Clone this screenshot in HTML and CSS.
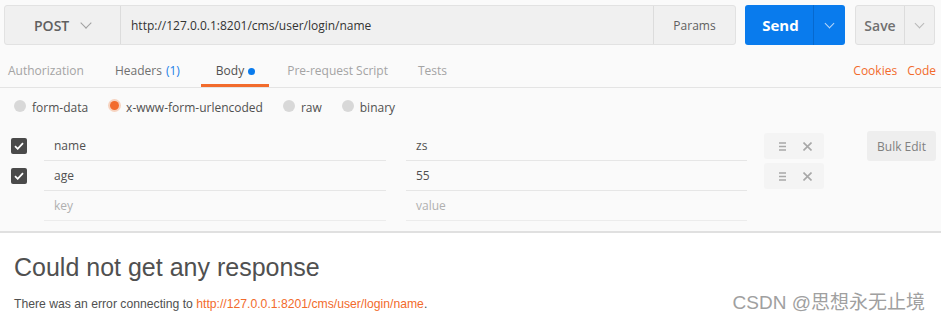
FILE: index.html
```html
<!DOCTYPE html>
<html lang="en">
<head>
  <meta charset="UTF-8" />
  <title>Postman request</title>
  <link rel="stylesheet" href="styles.css">
</head>
<body>
  <!-- URL bar -->
  <div class="url-bar">
    <div class="request">
      <div class="method">POST <span class="chev"></span></div>
      <div class="url">http://127.0.0.1:8201/cms/user/login/name</div>
      <div class="params">Params</div>
    </div>
    <div class="send">
      <span class="send-label">Send</span>
      <span class="send-drop"><span class="chev white"></span></span>
    </div>
    <div class="save">
      <span class="save-label">Save</span>
      <span class="save-drop"><span class="chev light"></span></span>
    </div>
  </div>

  <!-- Request tabs -->
  <div class="tabs">
    <span class="tab tab-auth">Authorization</span>
    <span class="tab tab-headers">Headers <span class="count">(1)</span></span>
    <span class="tab tab-body active">Body <span class="dot"></span></span>
    <span class="tab tab-pre">Pre-request Script</span>
    <span class="tab tab-tests">Tests</span>
    <span class="tab-links"><a>Cookies</a><a>Code</a></span>
  </div>

  <!-- Body type -->
  <div class="body-types">
    <label class="radio"><span class="circle"></span>form-data</label>
    <label class="radio"><span class="circle on"></span>x-www-form-urlencoded</label>
    <label class="radio"><span class="circle"></span>raw</label>
    <label class="radio"><span class="circle"></span>binary</label>
  </div>

  <!-- Key/value table -->
  <div class="kv">
    <div class="rows">
      <div class="row">
        <span class="check"><svg width="10" height="8" viewBox="0 0 10 8"><path d="M1 4.2 L3.7 6.8 L9 1.2" fill="none" stroke="#fff" stroke-width="1.8"/></svg></span>
        <div class="cell key">name</div>
        <div class="cell value">zs</div>
        <div class="row-actions">
          <svg width="7" height="9" viewBox="0 0 7 9"><path d="M0 1h7M0 4.5h7M0 8h7" stroke="#a8a8a8" stroke-width="1.4"/></svg>
          <svg width="9" height="9" viewBox="0 0 9 9"><path d="M0.5 0.5l8 8M8.5 0.5l-8 8" stroke="#a8a8a8" stroke-width="1.6"/></svg>
        </div>
      </div>
      <div class="row">
        <span class="check"><svg width="10" height="8" viewBox="0 0 10 8"><path d="M1 4.2 L3.7 6.8 L9 1.2" fill="none" stroke="#fff" stroke-width="1.8"/></svg></span>
        <div class="cell key">age</div>
        <div class="cell value">55</div>
        <div class="row-actions">
          <svg width="7" height="9" viewBox="0 0 7 9"><path d="M0 1h7M0 4.5h7M0 8h7" stroke="#a8a8a8" stroke-width="1.4"/></svg>
          <svg width="9" height="9" viewBox="0 0 9 9"><path d="M0.5 0.5l8 8M8.5 0.5l-8 8" stroke="#a8a8a8" stroke-width="1.6"/></svg>
        </div>
      </div>
      <div class="row">
        <span class="check empty"></span>
        <div class="cell key placeholder">key</div>
        <div class="cell value placeholder">value</div>
      </div>
    </div>
    <div class="bulk">Bulk Edit</div>
  </div>

  <!-- Response -->
  <div class="response">
    <h1>Could not get any response</h1>
    <p>There was an error connecting to <a>http://127.0.0.1:8201/cms/user/login/name</a>.</p>
    <div class="watermark">CSDN @思想永无止境</div>
  </div>
</body>
</html>
```

FILE: styles.css
```css
* {
  box-sizing: border-box;
}

body {
  margin: 0;
  font-family: 'Open Sans', 'Noto Sans', sans-serif;
  background: #fafafa;
  color: #505050;
  width: 941px;
  height: 320px;
  overflow: hidden;
}

/* url bar */
.url-bar {
  display: flex;
  height: 45px;
  padding: 5px 6px 0 4px;
}

.request {
  display: flex;
  flex: 1;
  height: 40px;
  background: #f0f0f0;
  border: 1px solid #e2e2e2;
  border-radius: 3px;
}

.method {
  width: 116px;
  display: flex;
  align-items: center;
  padding-left: 29px;
  font-size: 14px;
  font-weight: 600;
  color: #606060;
  border-right: 1px solid #dcdcdc;
}

.chev {
  display: inline-block;
  width: 8px;
  height: 8px;
  border-right: 1.5px solid #a0a0a0;
  border-bottom: 1.5px solid #a0a0a0;
  transform: rotate(45deg);
  margin: -4px 0 0 13px;
}

.chev.white {
  border-color: #b8d6f8;
  margin: -4px 0 0 0;
  width: 7px;
  height: 7px;
}

.chev.light {
  border-color: #b8b8b8;
  margin: -4px 0 0 0;
  width: 7px;
  height: 7px;
}

.url {
  flex: 1;
  display: flex;
  align-items: center;
  padding-left: 10px;
  font-size: 12px;
  color: #333;
}

.params {
  width: 82px;
  display: flex;
  align-items: center;
  justify-content: center;
  font-size: 12px;
  color: #606060;
  border-left: 1px solid #dcdcdc;
}

.send {
  display: flex;
  width: 100px;
  height: 40px;
  margin-left: 9px;
  background: #097bed;
  border-radius: 3px;
  color: #fff;
}

.send-label {
  width: 69px;
  display: flex;
  align-items: center;
  justify-content: center;
  padding-left: 3px;
  font-size: 15px;
  font-weight: 700;
  border-right: 1px solid #0669cf;
}

.send-drop, .save-drop {
  flex: 1;
  display: flex;
  align-items: center;
  justify-content: center;
}

.save {
  display: flex;
  width: 80px;
  height: 40px;
  margin-left: 10px;
  background: #f0f0f0;
  border: 1px solid #e0e0e0;
  border-radius: 3px;
}

.save-label {
  width: 49px;
  display: flex;
  align-items: center;
  justify-content: center;
  font-size: 14px;
  font-weight: 600;
  color: #707070;
  border-right: 1px solid #dcdcdc;
}

/* tabs */
.tabs {
  display: flex;
  align-items: stretch;
  height: 43px;
  border-bottom: 1px solid #e4e4e4;
  font-size: 12px;
  padding-top: 13px;
}

.tab {
  display: flex;
  align-items: flex-start;
  color: #a4a4a4;
  padding: 4px 0 0;
}

.tab-auth { margin-left: 8px; }
.tab-headers { margin-left: 31px; color: #707070; }
.tab-body {
  margin-left: 21px;
  padding: 4px 14px 0 15px;
  color: #505050;
  border-bottom: 3px solid #f26b2c;
}
.tab-pre { margin-left: 18px; }
.tab-tests { margin-left: 30px; }

.count {
  color: #1a80e8;
  margin-left: 4px;
}

.dot {
  display: inline-block;
  width: 7px;
  height: 7px;
  border-radius: 50%;
  background: #097bed;
  margin: 6px 0 0 4px;
}

.tab-links {
  margin-left: auto;
  padding: 4px 5px 0 0;
}

.tab-links a {
  color: #f26b2c;
  margin-left: 10px;
}

/* body types */
.body-types {
  display: flex;
  align-items: center;
  height: 39px;
  padding-left: 14px;
  font-size: 12px;
  color: #505050;
}

.radio {
  display: flex;
  align-items: center;
  margin-right: 20px;
}

.circle {
  width: 12px;
  height: 12px;
  border-radius: 50%;
  background: #d8d8d8;
  margin-right: 6px;
  margin-top: -4px;
}

.circle.on {
  background: #f26b2c;
  box-shadow: 0 0 0 2px #f6d3c0;
  width: 9px;
  height: 9px;
  margin-left: 2px;
  margin-right: 7px;
}

/* key/value table */
.kv {
  display: flex;
  padding: 4px 5px 0 11px;
  height: 102px;
}

.rows {
  display: flex;
  flex-direction: column;
}

.row {
  display: flex;
  align-items: center;
  height: 30px;
}

.check {
  width: 16px;
  height: 16px;
  border-radius: 2px;
  background: #4a4a4a;
  display: flex;
  align-items: center;
  justify-content: center;
  margin-right: 17px;
}

.check.empty {
  background: none;
}

.cell {
  height: 30px;
  display: flex;
  align-items: center;
  padding: 0 0 0 10px;
  font-size: 12px;
  color: #505050;
  border-bottom: 1px solid #e6e6e6;
}

.key { width: 342px; }
.value { width: 341px; margin-left: 20px; }

.row:last-child .cell { border-bottom-color: #ececec; }

.placeholder { color: #b0b0b0; }

.row-actions {
  display: flex;
  align-items: center;
  justify-content: space-around;
  padding: 0 4px 0 6px;
  width: 60px;
  height: 26px;
  margin-left: 17px;
  background: #f4f4f4;
  border-radius: 3px;
}

.bulk {
  margin-left: 43px;
  width: 69px;
  height: 30px;
  background: #eeeeee;
  border-radius: 3px;
  display: flex;
  align-items: center;
  justify-content: center;
  font-size: 12px;
  color: #808080;
}

/* response */
.response {
  position: relative;
  border-top: 2px solid #e0e0e0;
  margin-top: 2px;
  background: #fff;
  padding: 20px 14px 0;
  font-family: 'Liberation Sans', Arial, sans-serif;
  height: 100px;
}

.response h1 {
  margin: 0;
  font-size: 25px;
  font-weight: 400;
  color: #505050;
}

.response p {
  margin: 15px 0 0;
  font-size: 12.2px;
  color: #505050;
}

.response a {
  color: #f26b2c;
}

.watermark {
  position: absolute;
  right: 16px;
  top: 54px;
  font-family: 'Liberation Sans', 'Noto Sans CJK SC', sans-serif;
  font-size: 19px;
  color: #a0a0a0;
}
```
